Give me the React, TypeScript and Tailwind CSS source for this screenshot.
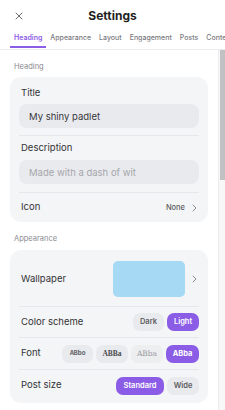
import React from "react";

const Chevron = () => (
  <svg width="5" height="8" viewBox="0 0 5 8" fill="none" className="shrink-0">
    <polyline points="1,1 4,4 1,7" stroke="#8a8a8e" strokeWidth="1" strokeLinecap="round" strokeLinejoin="round" />
  </svg>
);

const Divider = () => <div className="h-px bg-[#e6e7ea]" />;

const Seg = ({ label, active, className = "" }: { label: string; active?: boolean; className?: string }) => (
  <div
    className={`h-[18px] rounded-[7px] flex items-center justify-center text-[7.5px] font-semibold ${
      active ? "bg-[#8b5ce6] text-white" : "bg-[#e9eaed] text-[#5c5c60]"
    } ${className}`}
  >
    {label}
  </div>
);

const tabs = ["Heading", "Appearance", "Layout", "Engagement", "Posts", "Content"];

export default function App() {
  return (
    <div className="w-[225px] h-[410px] bg-white flex flex-col overflow-hidden font-['Inter',sans-serif] text-[#333336]">
      {/* Header */}
      <div className="grid grid-cols-[1fr_auto_1fr] items-center h-[32px]">
        <div className="pl-[15px] flex items-center">
          <svg width="8" height="8" viewBox="0 0 8 8">
            <path d="M1 1L7 7M7 1L1 7" stroke="#6b6b70" strokeWidth="1" strokeLinecap="round" />
          </svg>
        </div>
        <div className="text-[12px] font-bold text-[#1f1f22] leading-none">Settings</div>
        <div />
      </div>

      {/* Tabs */}
      <div className="h-[18px] border-b border-[#ececef] flex items-start pl-[10px] overflow-hidden whitespace-nowrap">
        {tabs.map((t, i) => (
          <div
            key={t}
            className={`px-[4px] pt-[1px] pb-[3px] leading-[10px] text-[7px] border-b-[2px] ${
              i === 0 ? "border-[#8b5ce6] text-[#8b5ce6] font-semibold" : "border-transparent text-[#7a7a80] font-medium"
            }`}
          >
            {t}
          </div>
        ))}
      </div>

      <div className="flex flex-1 min-h-0">
        <div className="flex-1 min-w-0 px-[10px] pt-[12px] overflow-hidden">
          {/* Heading section */}
          <div className="pl-[4px] text-[7.5px] leading-[10px] text-[#8a8a90] mb-[5px]">Heading</div>
          <div className="bg-[#f4f5f7] rounded-[11px] px-[9px]">
            <div className="pt-[10px] pb-[7px]">
              <div className="pl-[2px] text-[9.5px] leading-[12px]">Title</div>
              <input
                readOnly
                value="My shiny padlet"
                className="mt-[5px] w-full h-[24px] rounded-[8px] bg-[#e9eaee] px-[10px] text-[9.5px] text-[#38383c] outline-none"
              />
            </div>
            <Divider />
            <div className="pt-[6px] pb-[8px]">
              <div className="pl-[2px] text-[9.5px] leading-[12px]">Description</div>
              <input
                readOnly
                placeholder="Made with a dash of wit"
                className="mt-[6px] w-full h-[24px] rounded-[8px] bg-[#e9eaee] px-[10px] text-[9.5px] text-[#38383c] placeholder:text-[#a6a6ab] outline-none"
              />
            </div>
            <Divider />
            <div className="h-[29px] flex items-center justify-between pl-[2px]">
              <span className="text-[9.5px]">Icon</span>
              <div className="flex items-center gap-[7px] pr-[2px]">
                <span className="text-[7.5px] text-[#5c5c60] font-medium">None</span>
                <Chevron />
              </div>
            </div>
          </div>

          {/* Appearance section */}
          <div className="pl-[4px] mt-[12px] text-[7.5px] leading-[10px] text-[#8a8a90] mb-[6px]">Appearance</div>
          <div className="bg-[#f4f5f7] rounded-[11px] px-[9px] pb-[2px]">
            <div className="h-[56px] flex items-center justify-between pl-[2px] pt-[2px]">
              <span className="text-[9.5px]">Wallpaper</span>
              <div className="flex items-center gap-[7px] pr-[2px]">
                <div className="w-[72px] h-[36px] rounded-[5px] bg-[#a6d9f4]" />
                <Chevron />
              </div>
            </div>
            <Divider />
            <div className="h-[30px] flex items-center justify-between pl-[2px]">
              <span className="text-[9.5px]">Color scheme</span>
              <div className="flex gap-[3px]">
                <Seg label="Dark" className="w-[31px]" />
                <Seg label="Light" active className="w-[32px]" />
              </div>
            </div>
            <Divider />
            <div className="h-[31px] flex items-center justify-between pl-[2px]">
              <span className="text-[9.5px]">Font</span>
              <div className="flex gap-[3px]">
                <div className="w-[31px] h-[18px] rounded-[7px] bg-[#e9eaed] flex items-center justify-center text-[7px] font-semibold text-[#6a6a70] font-['DejaVu_Sans_Mono',monospace] tracking-[-0.3px]">
                  ABbo
                </div>
                <div className="w-[32px] h-[18px] rounded-[7px] bg-[#e9eaed] flex items-center justify-center text-[7.5px] font-bold text-[#4a4a4e] font-['Liberation_Serif',serif]">
                  ABBa
                </div>
                <div className="w-[32px] h-[18px] rounded-[7px] bg-[#eceef0] flex items-center justify-center text-[7.5px] text-[#9a9aa0] font-['DejaVu_Serif',serif]">
                  ABba
                </div>
                <div className="w-[33px] h-[18px] rounded-[7px] bg-[#8b5ce6] flex items-center justify-center text-[7.5px] font-bold text-white">
                  ABba
                </div>
              </div>
            </div>
            <Divider />
            <div className="h-[31px] flex items-center justify-between pl-[2px]">
              <span className="text-[9.5px]">Post size</span>
              <div className="flex gap-[3px]">
                <Seg label="Standard" active className="w-[48px]" />
                <Seg label="Wide" className="w-[32px]" />
              </div>
            </div>
          </div>
        </div>

        {/* Scrollbar */}
        <div className="w-[7px] bg-[#f8f8f8] border-l border-[#ececec] pl-[1px]">
          <div className="w-[5px] h-[130px] bg-[#c1c1c3]" />
        </div>
      </div>
    </div>
  );
}
